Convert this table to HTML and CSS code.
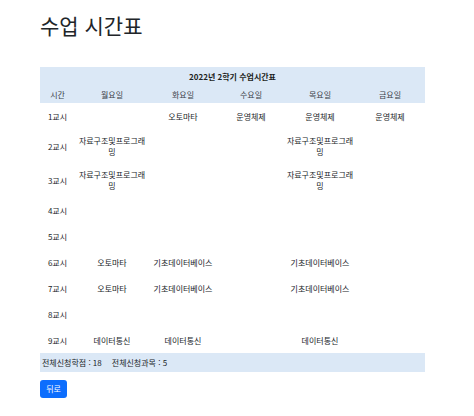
FILE: index.html
```html
<!DOCTYPE html>
<html lang="ko">
<head>
<meta charset="utf-8">
<title>수업 시간표</title>
<link rel="stylesheet" href="styles.css">
</head>
<body>
<div class="page">
  <h1 class="title">수업 시간표</h1>
  <table class="timetable">
    <colgroup>
      <col class="c-time"><col class="c-mon"><col class="c-tue"><col class="c-wed"><col class="c-thu"><col class="c-fri">
    </colgroup>
    <thead>
      <tr class="row-caption"><th colspan="6">2022년 2학기 수업시간표</th></tr>
      <tr class="row-days"><td>시간</td><td>월요일</td><td>화요일</td><td>수요일</td><td>목요일</td><td>금요일</td></tr>
    </thead>
    <tbody>
      <tr class="row"><td>1교시</td><td></td><td>오토마타</td><td>운영체제</td><td>운영체제</td><td>운영체제</td></tr>
      <tr class="row tall"><td>2교시</td><td>자료구조및프로그래밍</td><td></td><td></td><td>자료구조및프로그래밍</td><td></td></tr>
      <tr class="row tall"><td>3교시</td><td>자료구조및프로그래밍</td><td></td><td></td><td>자료구조및프로그래밍</td><td></td></tr>
      <tr class="row"><td>4교시</td><td></td><td></td><td></td><td></td><td></td></tr>
      <tr class="row"><td>5교시</td><td></td><td></td><td></td><td></td><td></td></tr>
      <tr class="row"><td>6교시</td><td>오토마타</td><td>기초데이터베이스</td><td></td><td>기초데이터베이스</td><td></td></tr>
      <tr class="row"><td>7교시</td><td>오토마타</td><td>기초데이터베이스</td><td></td><td>기초데이터베이스</td><td></td></tr>
      <tr class="row"><td>8교시</td><td></td><td></td><td></td><td></td><td></td></tr>
      <tr class="row"><td>9교시</td><td>데이터통신</td><td>데이터통신</td><td></td><td>데이터통신</td><td></td></tr>
    </tbody>
    <tfoot>
      <tr class="row-total"><td colspan="6"><span class="stat">전체신청학점 : 18</span><span class="stat">전체신청과목 : 5</span></td></tr>
    </tfoot>
  </table>
  <button class="btn-back" type="button">뒤로</button>
</div>
</body>
</html>
```

FILE: styles.css
```css
html, body {
  margin: 0;
  padding: 0;
  background: #ffffff;
}
body {
  font-family: "Noto Sans CJK KR", "Noto Sans", sans-serif;
  color: #212529;
}
.page {
  width: 385px;
  padding: 13px 0 0 40px;
}
.title {
  margin: 0 0 30px;
  font-size: 21px;
  line-height: 24px;
  font-weight: 400;
  color: #212529;
}
.timetable {
  width: 385px;
  table-layout: fixed;
  border-collapse: collapse;
  font-size: 8px;
  line-height: 11px;
}
.c-time { width: 35px; }
.c-mon { width: 74px; }
.c-tue { width: 68px; }
.c-wed { width: 68px; }
.c-thu { width: 70px; }
.c-fri { width: 70px; }
.timetable td, .timetable th {
  padding: 0 1px;
  text-align: center;
  vertical-align: middle;
}
.row-caption, .row-days, .row-total {
  background: #dbe8f6;
}
.row-caption th {
  height: 18px;
  font-weight: 700;
  color: #1b1e21;
}
.row-days td {
  height: 18px;
  color: #3b4148;
}
.row td {
  height: 26px;
}
.row.tall td {
  height: 34px;
}
.row-total td {
  height: 19px;
  text-align: left;
  padding-left: 2px;
}
.stat + .stat {
  margin-left: 10px;
}
.btn-back {
  display: block;
  margin-top: 8px;
  width: 27px;
  height: 18px;
  padding: 0;
  border: none;
  border-radius: 3px;
  background: #0d6efd;
  color: #ffffff;
  font-family: "Noto Sans CJK KR", "Noto Sans", sans-serif;
  font-size: 8px;
  line-height: 18px;
  text-align: center;
}
```
